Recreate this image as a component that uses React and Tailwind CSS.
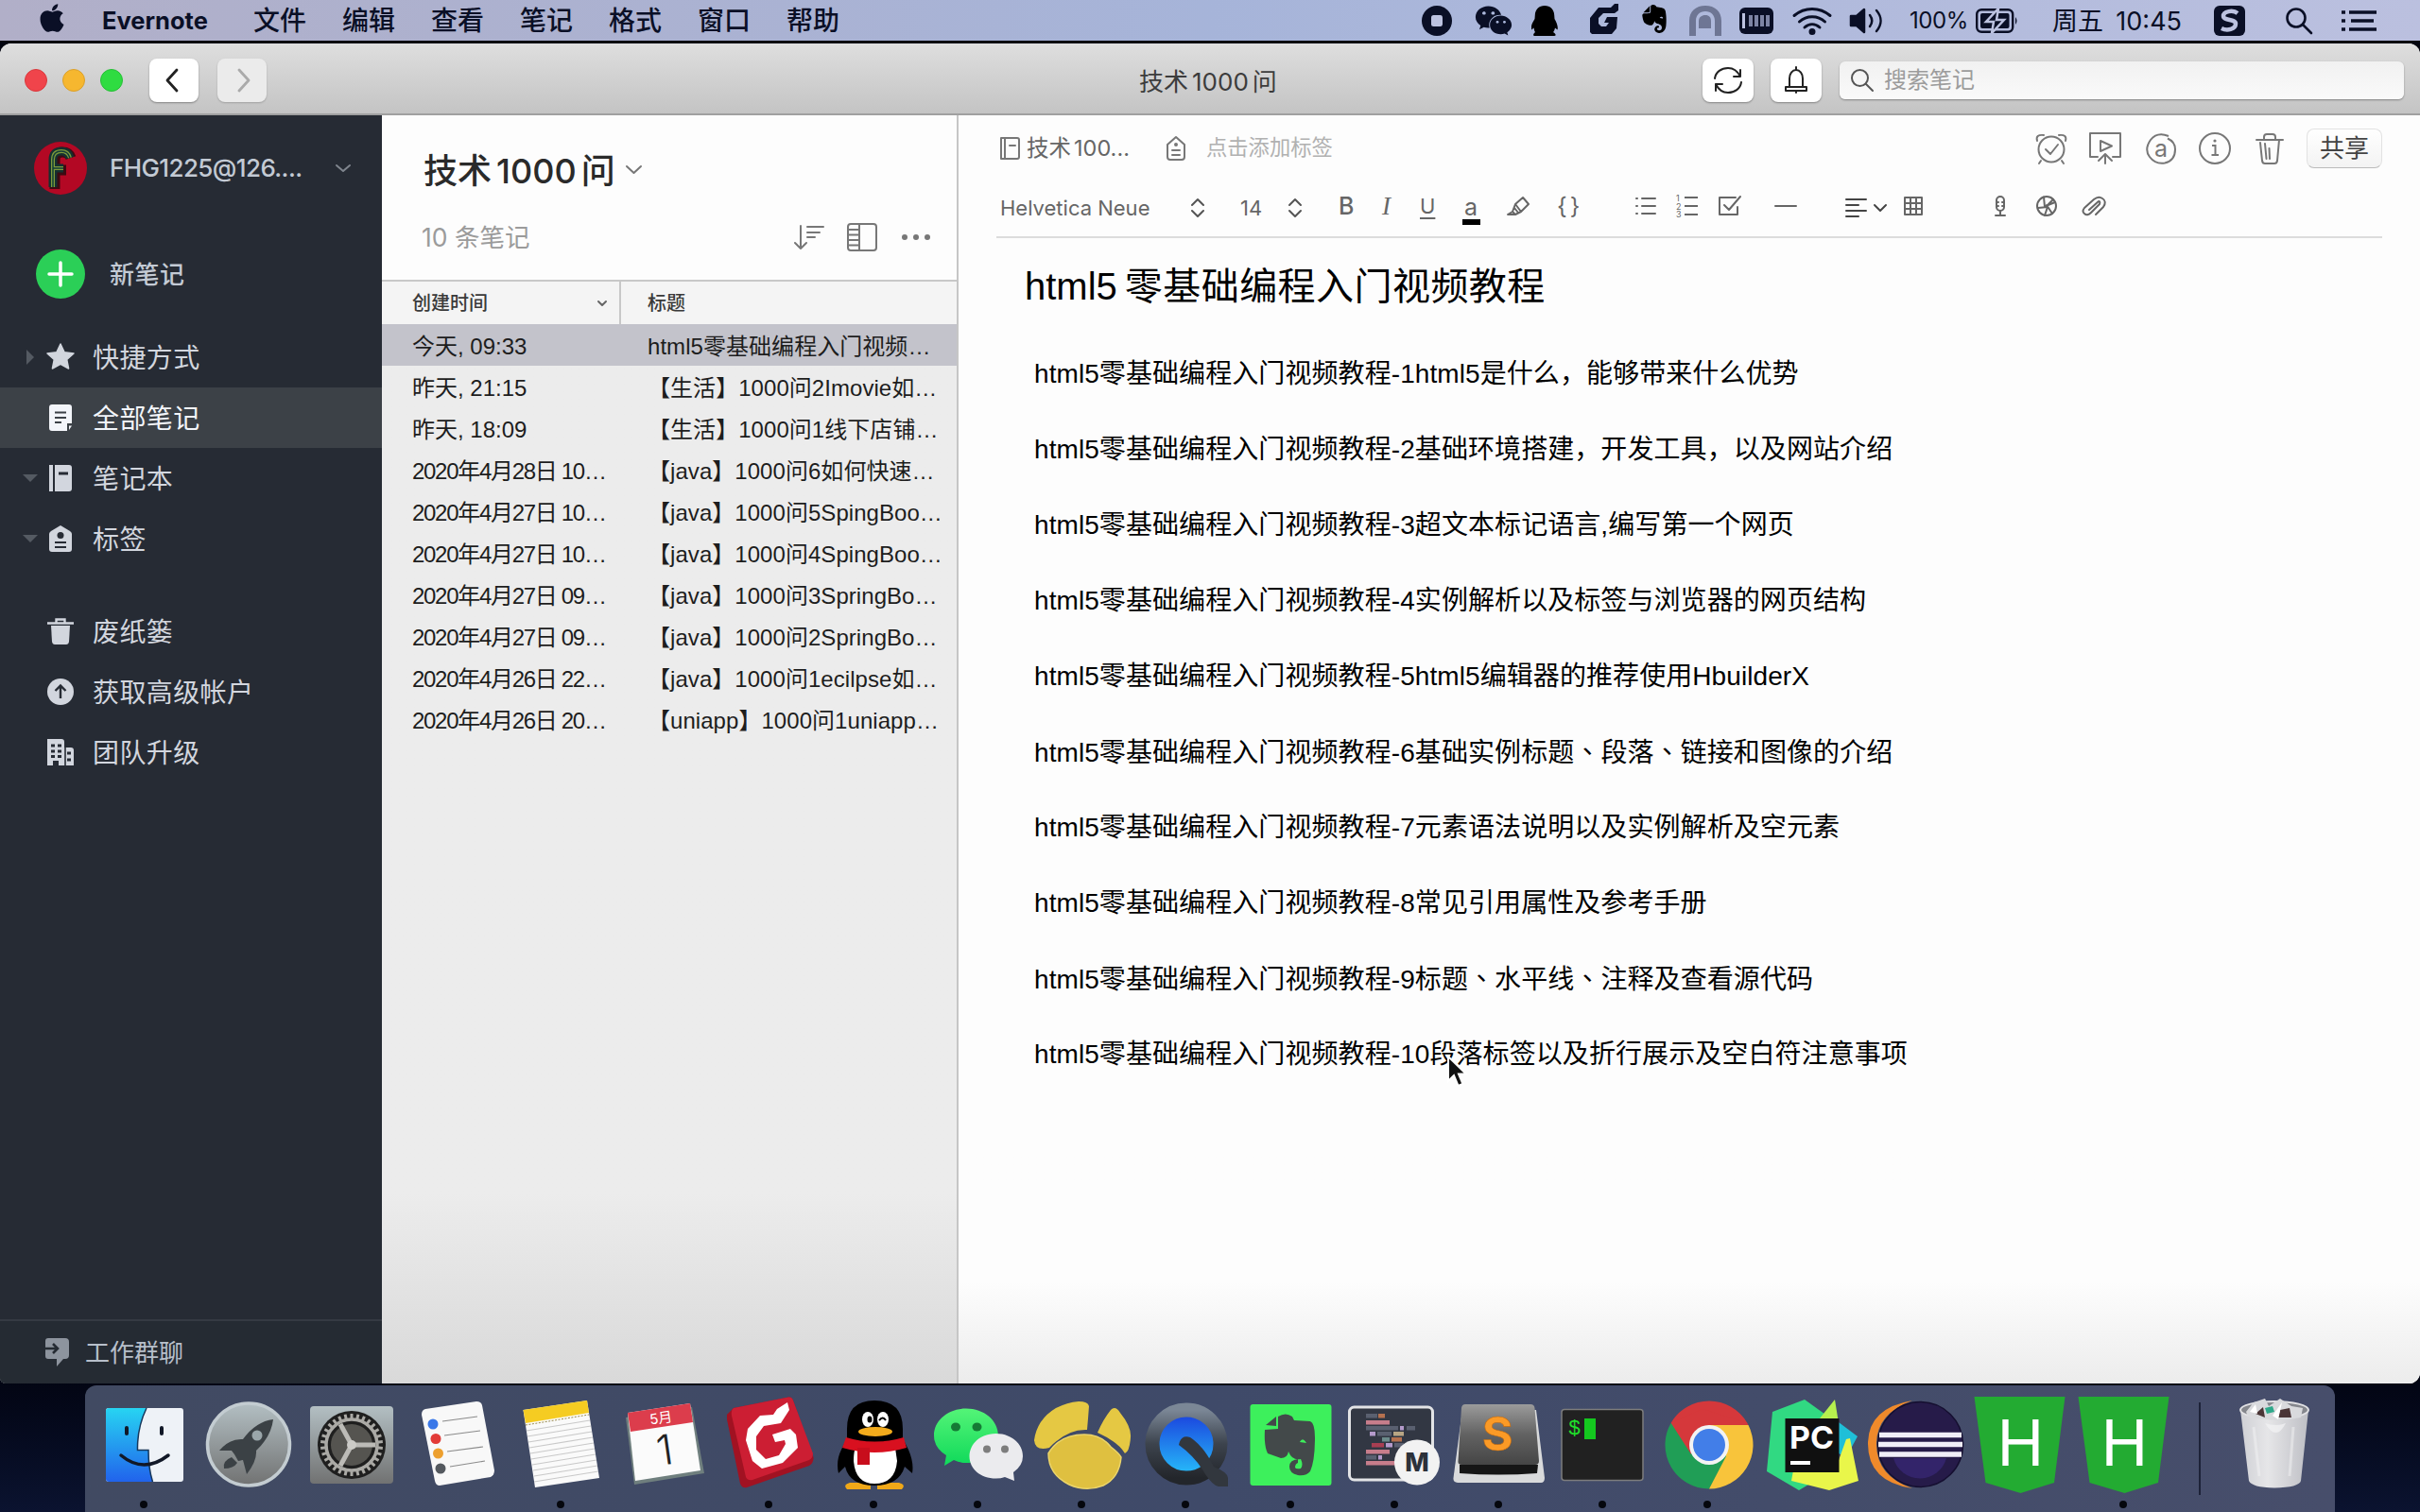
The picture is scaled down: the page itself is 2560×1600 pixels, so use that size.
import React from 'react';
import { FaApple, FaEvernote, FaQq, FaWeixin } from 'react-icons/fa';

const menus = ['文件', '编辑', '查看', '笔记', '格式', '窗口', '帮助'];

const notes = [
  { date: '今天, 09:33', title: 'html5零基础编程入门视频…', tight: false },
  { date: '昨天, 21:15', title: '【生活】1000问2Imovie如…', tight: false },
  { date: '昨天, 18:09', title: '【生活】1000问1线下店铺…', tight: false },
  { date: '2020年4月28日 10…', title: '【java】1000问6如何快速…', tight: true },
  { date: '2020年4月27日 10…', title: '【java】1000问5SpingBoo…', tight: true },
  { date: '2020年4月27日 10…', title: '【java】1000问4SpingBoo…', tight: true },
  { date: '2020年4月27日 09…', title: '【java】1000问3SpringBo…', tight: true },
  { date: '2020年4月27日 09…', title: '【java】1000问2SpringBo…', tight: true },
  { date: '2020年4月26日 22…', title: '【java】1000问1ecilpse如…', tight: true },
  { date: '2020年4月26日 20…', title: '【uniapp】1000问1uniapp…', tight: true },
];

const lines = [
  'html5零基础编程入门视频教程-1html5是什么，能够带来什么优势',
  'html5零基础编程入门视频教程-2基础环境搭建，开发工具，以及网站介绍',
  'html5零基础编程入门视频教程-3超文本标记语言,编写第一个网页',
  'html5零基础编程入门视频教程-4实例解析以及标签与浏览器的网页结构',
  'html5零基础编程入门视频教程-5html5编辑器的推荐使用HbuilderX',
  'html5零基础编程入门视频教程-6基础实例标题、段落、链接和图像的介绍',
  'html5零基础编程入门视频教程-7元素语法说明以及实例解析及空元素',
  'html5零基础编程入门视频教程-8常见引用属性及参考手册',
  'html5零基础编程入门视频教程-9标题、水平线、注释及查看源代码',
  'html5零基础编程入门视频教程-10段落标签以及折行展示及空白符注意事项',
];

// The enumeration comma sits in the middle of its box
const NoteLine = ({ text }) => (
  <div className="flex h-20 items-center pl-20 pt-[7px] text-[28px] tracking-[0.08px]">
    <p className="whitespace-nowrap">
      {text.split('、').map((part, i) => (
        <React.Fragment key={i}>
          {i > 0 && <span className="font-['Noto_Sans_CJK_TC',sans-serif]" lang="zh-TW">、</span>}
          {part}
        </React.Fragment>
      ))}
    </p>
  </div>
);

// Thin line icon, drawn 1:1 in its own box
const Line = ({ w, h, className = '', sw = 2, children }) => (
  <svg
    width={w}
    height={h}
    viewBox={`0 0 ${w} ${h}`}
    className={`shrink-0 overflow-visible ${className}`}
    fill="none"
    stroke="currentColor"
    strokeWidth={sw}
    strokeLinecap="round"
    strokeLinejoin="round"
  >
    {children}
  </svg>
);

const GMark = ({ className }) => (
  <svg width="30" height="32" viewBox="0 0 30 32" className={`shrink-0 ${className}`} fill="currentColor">
    <path d="M30 0V7L26 10H14L9 15V21L12 24H17L20 20H15L18 14H29L28 26L23 32H2L0 30V15L9 4H22L26 0Z" />
  </svg>
);

const MenuBar = () => (
  <div className="flex h-[43px] w-full shrink-0 items-center bg-linear-to-r from-[#b1afc8] via-[#a6b4d9] to-[#bbc0df] text-[28px] text-[#0a0f26]">
    <FaApple className="mb-[5px] ml-[40px] h-[34px] w-[30px] shrink-0" />
    <div className="ml-[38px] w-[160px] shrink-0 text-[25.5px] font-bold">Evernote</div>
    {menus.map((m) => (
      <div key={m} className="w-[94px] shrink-0 whitespace-nowrap pt-px font-medium">{m}</div>
    ))}
    <div className="ml-auto flex w-[1056px] shrink-0 items-center">
      <svg width="32" height="32" viewBox="0 0 32 32" className="shrink-0">
        <circle cx="16" cy="16" r="16" fill="currentColor" />
        <rect x="10" y="10" width="12" height="12" rx="2.5" fill="#bcc2e0" />
      </svg>
      <FaWeixin className="ml-6 h-[36px] w-[40px] shrink-0" />
      <svg width="28" height="32" viewBox="0 0 28 32" className="ml-5 shrink-0" fill="#000">
        <path d="M14 0C20 0 24 4 24.200 10L24.500 14C27 18 28.500 23 27.500 25.500L25 23.500C24.500 26 24 27 23 28C26 30 27 32 23 32H4C1 32 2 30 4 28C3 27 3 25 2.500 23.500L0 25.500C-1 22 1 18 3.500 14L3.800 10C4 4 8 0 14 0Z" />
      </svg>
      <GMark className="mb-1 ml-[34px]" />
      <FaEvernote className="mb-1 ml-[22px] h-[34px] w-[32px] shrink-0 text-black" />
      <svg width="34" height="32" viewBox="0 0 34 32" className="ml-[21px] shrink-0" fill="#6e7694">
        <path d="M0 32V16C0 6 7 0 17 0S34 6 34 16V32H27V16C27 10 23 6 17 6S7 10 7 16V32ZM10 24V17C10 12 13 10 17 10S23 12 23 17V24Z" />
      </svg>
      <svg width="36" height="28" viewBox="0 0 36 28" className="ml-[19px] shrink-0">
        <rect width="36" height="28" rx="6" fill="currentColor" />
        <rect x="3" y="6" width="3" height="16" fill="#bcc2e0" />
        <path d="M12 8v12M18 8v12M24 8v12M30 8v12" stroke="#7d84a4" strokeWidth="4" />
      </svg>
      <Line w={42} h={30} sw={3} className="ml-5">
        <path d="M2 9.500C13 0 29 0 40 9.500M7.500 16C15 9 27 9 34.500 16M13 22C18 17.500 24 17.500 29 22" />
        <circle cx="21" cy="26.500" r="2" fill="currentColor" />
      </Line>
      <Line w={36} h={26} className="ml-[19px]" sw={2.5}>
        <path d="M1 8H7L15 1V25L7 18H1Z" fill="currentColor" />
        <path d="M21 7C24 11 24 15 21 19M28 2C34 9 34 17 28 24" />
      </Line>
      <div className="ml-[27px] w-[66px] shrink-0 whitespace-nowrap text-[24px] tracking-[-0.4px]">100%</div>
      <svg width="46" height="26" viewBox="0 0 46 26" className="ml-1 shrink-0">
        <rect x="1.200" y="1.200" width="38" height="23.600" rx="5" fill="none" stroke="currentColor" strokeWidth="2.400" />
        <rect x="5" y="5" width="30.500" height="16" rx="2" fill="currentColor" />
        <path d="M42 9Q45 13 42 17Z" fill="currentColor" />
        <path d="M24 0L11 14H19L17 26L30 12H22Z" fill="currentColor" stroke="#bcc2e0" strokeWidth="2.500" />
      </svg>
      <div className="ml-[35px] flex w-[141px] shrink-0 items-center justify-between whitespace-nowrap pr-1 pt-px">
        <span className="text-[27px]">周五</span>
        <span className="text-[27px]">10:45</span>
      </div>
      <svg width="33" height="32" viewBox="0 0 33 32" className="ml-[30px] shrink-0">
        <rect width="33" height="32" rx="6" fill="currentColor" />
        <path d="M25 8C20 4 10 6 10 11C10 16 23 14 23 19C23 25 14 27 8 24" fill="none" stroke="#bcc2e0" strokeWidth="4.500" />
      </svg>
      <Line w={30} h={28} sw={2.6} className="ml-[43px]">
        <circle cx="11" cy="11" r="9.500" />
        <path d="M18 18L27 27" />
      </Line>
      <svg width="37" height="22" viewBox="0 0 37 22" className="ml-[29px] shrink-0" stroke="currentColor" strokeWidth="3.600">
        <path d="M0 2h4M8 2h29M0 11h4M10 11h24M0 20h4M8 20h29" />
      </svg>
    </div>
  </div>
);

const TitleBar = () => (
  <div className="flex h-[76px] shrink-0 items-center border-b-2 border-[#a0a0a0] bg-linear-to-b from-[#dedede] to-[#c4c4c4] pt-[3px]">
    <div className="flex w-[738px] shrink-0 items-center">
      <div className="ml-[26px] size-6 rounded-full border border-[#d9383c] bg-[#f0444b]" />
      <div className="ml-4 size-6 rounded-full border border-[#dba02a] bg-[#f6b72f]" />
      <div className="ml-4 size-6 rounded-full border border-[#26bf36] bg-[#2fdc41]" />
      <div className="ml-7 flex h-[46px] w-[52px] items-center justify-center rounded-lg bg-white text-[#222] shadow-[0_1px_2px_rgba(0,0,0,0.35)]">
        <Line w={12} h={22} sw={2.8} className="mr-1 mt-px"><path d="M11 0L1 11L11 22" /></Line>
      </div>
      <div className="ml-5 flex h-[46px] w-[52px] items-center justify-center rounded-lg bg-[#ebebeb] text-[#aaa] shadow-[0_1px_2px_rgba(0,0,0,0.2)]">
        <Line w={12} h={22} sw={2.8} className="ml-1 mt-px"><path d="M1 0L11 11L1 22" /></Line>
      </div>
    </div>
    <div className="flex w-[1063px] shrink-0 gap-[4px] whitespace-nowrap pl-[467px] pt-1 text-[26px] text-[#3c3c3c]">
      <span>技术</span>
      <span>1000</span>
      <span>问</span>
    </div>
    <div className="flex h-[46px] w-[54px] shrink-0 items-center justify-center rounded-lg bg-white text-[#222] shadow-[0_1px_2px_rgba(0,0,0,0.35)]">
      <Line w={30} h={28}>
        <path d="M1 12C2 5 8 1 15 1C21 1 25 4 28 10M28 3V10H21M29 16C28 23 22 27 15 27C9 27 5 24 2 18M2 25V18H9" />
      </Line>
    </div>
    <div className="ml-[18px] flex h-[46px] w-[54px] shrink-0 items-center justify-center rounded-lg bg-white text-[#222] shadow-[0_1px_2px_rgba(0,0,0,0.35)]">
      <Line w={26} h={28}>
        <path d="M13 0V3M6 21V12C6 7 9 3 13 3S20 7 20 12V21M2 21H24V25H2ZM13 25V27" />
      </Line>
    </div>
    <div className="ml-[19px] flex h-10 w-[597px] shrink-0 items-center rounded-md bg-linear-to-b from-[#f1f1f1] to-[#fafafa] pl-3 text-[24px] text-[#9c9c9c] shadow-[0_1px_2px_rgba(0,0,0,0.35)]">
      <Line w={24} h={24} className="text-[#555]">
        <circle cx="9.500" cy="9.500" r="8.500" />
        <path d="M16 16L23 23" />
      </Line>
      <span className="ml-[11px] whitespace-nowrap pt-px">搜索笔记</span>
    </div>
  </div>
);

const Star = () => (
  <path d="M14 0l4.100 8.800 9.900 1.200-7.300 6.500L22.600 26 14 21.300 5.400 26l1.900-9.500L0 10l9.900-1.200z" stroke="currentColor" strokeWidth="1.500" strokeLinejoin="round" />
);

const sideIcons = {
  star: <Star />,
  note: (
    <>
      <path d="M5 0H23Q26 0 26 3V20H21V28H5Q2 28 2 25V3Q2 0 5 0Z" />
      <path d="M23 22.500H26L23 27Z" />
      <path d="M8 8.500H20M8 14H20M8 19H15" stroke="#3c4147" strokeWidth="2.200" />
    </>
  ),
  book: (
    <>
      <path d="M2 0H6V28H2ZM8 0H23Q26 0 26 3V25Q26 28 23 28H8Z" />
      <path d="M12 9H22" stroke="#262b34" strokeWidth="3" />
    </>
  ),
  tag: (
    <>
      <path d="M14 0L24 6Q26 7.500 26 9V25Q26 28 23 28H5Q2 28 2 25V9Q2 7.500 4 6Z" />
      <circle cx="14" cy="10.500" r="3.500" fill="#262b34" />
      <path d="M8 18H20M8 23H20" stroke="#262b34" strokeWidth="2" />
    </>
  ),
  trash: (
    <>
      <path d="M4 8H24L23 25Q22.500 28 20 28H8Q5.500 28 5 25Z" />
      <path d="M0 5.500H28M9.500 5V1.500H18.500V5" fill="none" stroke="currentColor" strokeWidth="2.400" />
    </>
  ),
  up: (
    <>
      <circle cx="14" cy="14" r="14" />
      <path d="M14 21V8M8.500 13L14 7.500L19.500 13" fill="none" stroke="#262b34" strokeWidth="2.400" />
    </>
  ),
  team: (
    <>
      <path d="M0 28V0H15Q18 0 18 3V9H25Q28 9 28 12V28H12V23H6V28Z" />
      <path d="M4 7H8M11 7H15M4 13H8M11 13H15M4 18.500H8M11 18.500H15M21 15H25M21 22H25" stroke="#262b34" strokeWidth="3" />
      <path d="M19 9V28" stroke="#262b34" strokeWidth="1.600" />
    </>
  ),
};

const SideItem = ({ icon, label, arrow, active }) => (
  <div className={`flex h-16 items-center ${active ? 'bg-[#3c4147] text-[#f3f5fa]' : 'text-[#d2d6de]'}`}>
    <div className="flex w-[50px] shrink-0 justify-center pl-[14px] text-[#545a62]">
      {arrow && (
        <svg width="16" height="16" viewBox="0 0 16 16" fill="currentColor">
          <path d={arrow === 'right' ? 'M4 0L12 8L4 16Z' : 'M0 4H16L8 12Z'} />
        </svg>
      )}
    </div>
    <svg width="28" height="28" viewBox="0 0 28 28" fill="currentColor" className="shrink-0 overflow-visible">
      {sideIcons[icon]}
    </svg>
    <span className="ml-5 whitespace-nowrap pt-px text-[28px] tracking-[0.4px]">{label}</span>
  </div>
);

const Sidebar = () => (
  <div className="flex w-[404px] shrink-0 flex-col bg-[#262b34]">
    <div className="flex h-[112px] items-center pl-9">
      <svg width="56" height="56" viewBox="0 0 56 56" className="shrink-0">
        <circle cx="28" cy="28" r="28" fill="#b30824" />
        <g fill="none" strokeLinejoin="round">
          <path d="M22 50V20Q22 11 30 11Q37 11 39 17M22 30H34" stroke="#3d0a12" strokeWidth="11" />
          <path d="M20 48V19Q20 10 29 10Q36 10 38 17M20 28H31" stroke="#15302f" strokeWidth="9" />
          <path d="M20 48V19Q20 10 29 10Q36 10 38 17M20 28H31" stroke="#7d9a3a" strokeWidth="4" />
          <path d="M20 48V19Q20 10 29 10Q36 10 38 17M20 28H31" stroke="#123c38" strokeWidth="1.500" />
        </g>
      </svg>
      <span className="ml-6 w-[239px] shrink-0 whitespace-nowrap text-[26px] font-medium tracking-[-0.6px] text-[#c3cad4]">FHG1225@126....</span>
      <Line w={16} h={8} className="text-[#7f858e]"><path d="M1 1L8 7L15 1" /></Line>
    </div>
    <div className="flex h-[112px] items-center pl-[38px]">
      <div className="flex size-[52px] shrink-0 items-center justify-center rounded-full bg-[#2bcf57] text-white">
        <Line w={26} h={26} sw={3.5}><path d="M13 1V25M1 13H25" /></Line>
      </div>
      <span className="ml-[26px] pt-px text-[26px] font-medium tracking-[0.5px] text-[#c3cad4]">新笔记</span>
    </div>
    <SideItem icon="star" label="快捷方式" arrow="right" />
    <SideItem icon="note" label="全部笔记" active />
    <SideItem icon="book" label="笔记本" arrow="down" />
    <SideItem icon="tag" label="标签" arrow="down" />
    <div className="h-[34px]" />
    <SideItem icon="trash" label="废纸篓" />
    <SideItem icon="up" label="获取高级帐户" />
    <SideItem icon="team" label="团队升级" />
    <div className="mt-auto flex h-[68px] items-center border-t-2 border-[#353a43] bg-[#252b33] pl-12 text-[26px] text-[#b7bfca]">
      <svg width="25" height="30" viewBox="0 0 25 30" fill="#8d949e" className="shrink-0">
        <path d="M3 0H21Q25 0 25 4V18Q25 22 21 22H19L12 30V22H3Q0 22 0 19V3Q0 0 3 0Z" />
        <path d="M0 11H12M8 6L13 11L8 16" fill="none" stroke="#252b33" strokeWidth="2.600" />
      </svg>
      <span className="ml-[17px] whitespace-nowrap pt-px">工作群聊</span>
    </div>
  </div>
);

const NoteList = () => (
  <div className="flex w-[610px] shrink-0 flex-col border-r-2 border-[#c6c6c6] bg-linear-to-b from-[#ececec] from-85% to-[#d9d9d9]">
    <div className="h-[174px] shrink-0 bg-[#fdfdfd]">
      <div className="flex h-[118px] items-center pl-[44px] text-[36px] font-medium text-[#2a2a2a]">
        <div className="flex w-[214px] shrink-0 gap-[5px] whitespace-nowrap">
          <span>技术</span>
          <span>1000</span>
          <span>问</span>
        </div>
        <Line w={17} h={9} className="-mt-1 text-[#777]"><path d="M1 1L8.500 8L16 1" /></Line>
      </div>
      <div className="flex h-[22px] items-center pl-[42px] text-[26.5px] text-[#9b9b9b]">
        <span className="w-[394px] shrink-0 whitespace-nowrap">10 条笔记</span>
        <Line w={32} h={26} className="text-[#777]">
          <path d="M7 1V25M1 19L7 25L13 19M14 2H31M14 8H27M14 13H22" />
        </Line>
        <Line w={32} h={30} className="ml-6 text-[#777]">
          <rect x="1" y="1" width="30" height="28" rx="3" />
          <path d="M13 1V29M1 7H13M1 12.500H13M1 18H13M1 23.500H13" />
        </Line>
        <svg width="30" height="6" viewBox="0 0 30 6" fill="#777" className="ml-[26px] shrink-0">
          <circle cx="3" cy="3" r="3" /><circle cx="15" cy="3" r="3" /><circle cx="27" cy="3" r="3" />
        </svg>
      </div>
    </div>
    <div className="flex h-[47px] shrink-0 border-t-2 border-[#c8c8c8] bg-[#f4f4f4] text-[20px] font-medium text-[#3a3a3a]">
      <div className="flex w-[253px] shrink-0 items-center border-r-2 border-[#c8c8c8] pl-8">
        <span className="w-[196px] shrink-0 pt-px">创建时间</span>
        <Line w={10} h={6} className="text-[#666]"><path d="M1 1L5 5L9 1" /></Line>
      </div>
      <div className="flex items-center pl-7 pt-px">标题</div>
    </div>
    {notes.map((n, i) => (
      <div
        key={i}
        className={`flex h-11 shrink-0 items-center whitespace-nowrap pt-[3px] font-['Liberation_Sans','Noto_Sans_CJK_SC',sans-serif] text-[24px] text-[#1d1d1d] ${i === 0 ? 'bg-[#c3c3cb]' : ''}`}
      >
        <span className={`w-[281px] shrink-0 pl-8 ${n.tight ? 'tracking-[-1.3px]' : ''}`}>{n.date}</span>
        <span className="tracking-[0.05px]">{n.title}</span>
      </div>
    ))}
  </div>
);

const Stepper = ({ className }) => (
  <Line w={14} h={20} className={className}><path d="M1 7L7 1L13 7M1 13L7 19L13 13" /></Line>
);

const EditorHeader = () => (
  <div className="flex h-[70px] shrink-0 items-center pl-[44px] leading-normal text-[#777]">
    <Line w={21} h={24} className="">
      <path d="M1 1H18Q20 1 20 3V21Q20 23 18 23H1ZM5 1V23M10 9H16" />
    </Line>
    <div className="ml-[7px] flex w-[148px] shrink-0 gap-[3px] whitespace-nowrap text-[23.5px] text-[#666]">
      <span>技术</span>
      <span>100...</span>
    </div>
    <Line w={20} h={26}>
      <path d="M10 1L19 9V22Q19 25 16 25H4Q1 25 1 22V9ZM6 15H14M6 20H14" />
      <circle cx="10" cy="9" r="1" fill="currentColor" />
    </Line>
    <span className="ml-[22px] whitespace-nowrap pb-[2px] text-[22.3px] text-[#b1b1b1]">点击添加标签</span>
    <div className="ml-auto flex items-center pr-10">
      <Line w={32} h={33}>
        <circle cx="16" cy="17" r="13.500" />
        <path d="M10 17L15 22L23 12M1 8Q-1 1 8 2M31 8Q33 1 24 2M3 32L5 29M29 32L27 29" />
      </Line>
      <Line w={34} h={34} className="ml-6">
        <path d="M9 26H1V1H33V26H25M17 33V24M10 30L17 23L24 30M12 9V20L24 14.500Z" />
      </Line>
      <svg width="32" height="33" viewBox="0 0 32 33" className="ml-[26px] shrink-0 overflow-visible">
        <path d="M24 3Q12 -2 5 7Q-2 17 4 25Q10 33 20 31.500Q31 29 31 17Q31 9 23 5.500" fill="none" stroke="currentColor" strokeWidth="2" />
        <text x="16" y="25" textAnchor="middle" fontSize="25" fill="currentColor">a</text>
      </svg>
      <svg width="34" height="34" viewBox="0 0 34 34" className="ml-6 shrink-0">
        <circle cx="17" cy="17" r="16" fill="none" stroke="currentColor" strokeWidth="2" />
        <path d="M14 14H17.500V24M13.500 24H21" fill="none" stroke="currentColor" strokeWidth="2" />
        <circle cx="17" cy="9" r="1.600" fill="currentColor" />
      </svg>
      <Line w={30} h={33} className="ml-[26px]">
        <path d="M1 7H29M9 7V4Q9 1 12 1H18Q21 1 21 4V7M5 10L7 29Q7.500 32 10 32H20Q22.500 32 23 29L25 7M10 11L11.500 27M14.500 16L15 27" />
      </Line>
      <div className="ml-[24px] flex h-[42px] w-[80px] shrink-0 items-center justify-center rounded-lg border border-[#e2e2e2] border-b-[#bbb] bg-linear-to-b from-white to-[#f3f3f3] text-[26px] leading-none text-[#444]">共享</div>
    </div>
  </div>
);

const EditorToolbar = () => (
  <div className="mx-10 flex h-[60px] shrink-0 items-center border-b-2 border-[#dcdcdc] pb-[6px] text-[22px] text-[#666]">
    <span className="ml-1 w-[202px] shrink-0 whitespace-nowrap pt-1">Helvetica Neue</span>
    <Stepper className="mt-1 text-[#555]" />
    <span className="ml-[38px] w-[51px] shrink-0 pt-1">14</span>
    <Stepper className="mt-1 text-[#555]" />
    <span className="ml-[39px] w-[46px] shrink-0 text-[25px] font-medium">B</span>
    <span className="w-[40px] shrink-0 font-['Liberation_Serif',serif] text-[27px] italic">I</span>
    <span className="w-[45px] shrink-0 text-[22px] underline underline-offset-4">U</span>
    <div className="flex w-[47px] shrink-0 flex-col pt-2">
      <span className="h-[25px] pl-[2px] text-[25px] leading-[25px]">a</span>
      <span className="h-[6px] w-[19px] bg-black" />
    </div>
    <Line w={24} h={20} className="">
      <path d="M1 19H9L6 16ZM6 16L9 8L17 1L23 8L15 16L9 19M9 8L15 16M8 12L12 17" />
    </Line>
    <span className="ml-[29px] w-[83px] shrink-0 whitespace-nowrap text-[25px] tracking-[3px]">{'{}'}</span>
    <Line w={22} h={20}><path d="M1 2H2M1 10H2M1 18H2M7 2H21M7 10H21M7 18H21" /></Line>
    <svg width="24" height="24" viewBox="0 0 24 24" className="ml-[21px] shrink-0 overflow-visible" fill="currentColor">
      <g fontSize="9"><text x="0" y="7">1</text><text x="0" y="15.500">2</text><text x="0" y="24">3</text></g>
      <path d="M9 3H23M9 12H23M9 21H23" stroke="currentColor" strokeWidth="2" />
    </svg>
    <Line w={24} h={20} className="ml-[21px]"><path d="M18 1H1V19H20V11M6 9L11 14L23 0" /></Line>
    <Line w={22} h={2} className="ml-9"><path d="M0 1H22" /></Line>
    <Line w={22} h={20} className="ml-[52px] mt-1 text-[#444]"><path d="M1 1H22M1 7H14M1 13H22M1 19H14" /></Line>
    <Line w={14} h={8} className="ml-2 mt-1 text-[#444]"><path d="M1 1L7 7L13 1" /></Line>
    <Line w={20} h={20} className="ml-[18px]"><path d="M1 1H19V19H1ZM7 1V19M13 1V19M1 7H19M1 13H19" /></Line>
    <Line w={12} h={22} className="ml-[76px]">
      <rect x="2" y="1" width="8" height="15" rx="4" />
      <path d="M6 16V21M1 21H11M2 7H4M8 7H10M2 11H4M8 11H10" />
    </Line>
    <Line w={22} h={22} className="ml-8">
      <circle cx="11" cy="11" r="10" />
      <path d="M8 1.500L9 12M20 7L10 11M17 19L11 10M9 21L12 12M2 13L12 12M13 9L18 4" />
    </Line>
    <Line w={26} h={20} className="ml-[26px]">
      <path d="M15 19L23 11Q27 5 22 2Q18 -1 13 3L3 12Q0 16 3 18Q6 21 10 17L19 8Q20 5 18 5L8 14" />
    </Line>
  </div>
);

const Editor = () => (
  <div className="flex flex-1 flex-col bg-[#fdfdfd] bg-linear-to-b from-[#fdfdfd] from-92% to-[#ececec]">
    <EditorHeader />
    <EditorToolbar />
    <div className="font-['Liberation_Sans','Noto_Sans_CJK_SC',sans-serif] text-black">
      <div className="flex h-[100px] items-center gap-2 whitespace-nowrap pl-[70px] pt-px text-[40px]">
        <span>html5</span>
        <span className="tracking-[0.45px]">零基础编程入门视频教程</span>
      </div>
      {lines.map((l) => (
        <NoteLine key={l} text={l} />
      ))}
    </div>
  </div>
);

const gearTeeth = Array.from({ length: 30 }, (_, i) => i * 12);

const codeBars = [
  [25, 30, 12, '#5a6070'], [38, 30, 7, '#b5714f'], [25, 37, 25, '#c77d8b'],
  [25, 43, 34, '#5a6070'], [61, 43, 4, '#b49acb'], [68, 43, 9, '#5a6070'],
  [29, 49, 6, '#b49acb'], [37, 49, 15, '#5a6070'], [54, 49, 11, '#b8a584'],
  [42, 55, 8, '#6b8a8a'], [52, 55, 11, '#b5714f'], [31, 61, 13, '#a83e52'],
  [46, 61, 7, '#b49acb'], [55, 61, 10, '#5a6070'], [25, 68, 25, '#c77d8b'],
  [25, 74, 11, '#5a6070'], [38, 74, 4, '#b49acb'], [25, 80, 32, '#c77d8b'],
];

const HBuilder = () => (
  <>
    <path d="M7.500 12H103.500L92 103L56.500 114L19.500 103Z" fill="#23ab32" />
    <text x="56.500" y="85.500" textAnchor="middle" fontSize="67" fill="#fff">H</text>
  </>
);

const dockApps = [
  {
    dot: true,
    art: (
      <>
        <rect x="15" y="24" width="82" height="78" rx="3" fill="#eef2f7" />
        <path d="M58 24Q48 45 48.500 68.500H60Q60 88 64.500 102H18Q15 102 15 99V27Q15 24 18 24Z" fill="url(#finder)" />
        <path d="M58 24Q48 45 48.500 68.500H60Q60 88 64.500 102" fill="none" stroke="#16385c" strokeWidth="1.500" />
        <path d="M37 45V51M74 45V51" stroke="#111827" strokeWidth="4" strokeLinecap="round" />
        <path d="M31 74Q55 94 81 74" fill="none" stroke="#111827" strokeWidth="3.500" strokeLinecap="round" />
      </>
    ),
  },
  {
    art: (
      <>
        <circle cx="56" cy="62.500" r="43.500" fill="url(#steel)" stroke="#c3ccd1" strokeWidth="3.500" />
        <path d="M82 36Q64 38 50 57Q36 56 25 69L38 69L41 73L45 80L50 79L54 94Q65 80 64 69Q80 54 82 36Z" fill="#3b4145" />
        <path d="M38 76Q28 80 30 88Q40 88 44 82Z" fill="#3b4145" />
        <circle cx="65" cy="53" r="5.500" fill="#9aa6aa" />
      </>
    ),
  },
  {
    art: (
      <>
        <rect x="11" y="22" width="88" height="82" rx="4" fill="url(#steel)" />
        <circle cx="55" cy="63" r="36" fill="#1f1f1f" />
        {gearTeeth.map((a) => (
          <rect key={a} x="53.500" y="30" width="3" height="6" fill="#aaa9a5" transform={`rotate(${a} 55 63)`} />
        ))}
        <circle cx="55" cy="63" r="27" fill="none" stroke="#aaa9a5" strokeWidth="3.500" />
        <circle cx="55" cy="63" r="22" fill="#555450" />
        <path d="M55 63L43 41M55 63L80 63M55 63L43 85" stroke="#bcbbb7" strokeWidth="5" />
        <circle cx="55" cy="63" r="5" fill="#cccbc7" />
      </>
    ),
  },
  {
    art: (
      <>
        <path d="M22 25L76 17Q81 17 82 21L95 90Q95 95 91 97L37 106Q33 106 32 101L18 31Q18 26 22 25Z" fill="#f8f8f8" />
        <path d="M40 38L77 33M42 53L80 48M45 70L83 65M48 86L85 80" stroke="#8b8b8b" strokeWidth="1.200" />
        <circle cx="30" cy="41" r="5.500" fill="#3a78e8" /><circle cx="33" cy="56.500" r="5.500" fill="#e23b38" />
        <circle cx="35.500" cy="72" r="5.500" fill="#eda02f" /><circle cx="38" cy="88" r="5.500" fill="#54595f" />
      </>
    ),
  },
  {
    dot: true,
    art: (
      <>
        <path d="M15.500 26L83 16L96 98L28 108Z" fill="#fafafa" />
        <path d="M15.500 26L83 16L85 29L18 40Z" fill="#f5cc22" />
        <path d="M18 42L85 31" stroke="#9a8a4a" strokeWidth="1" strokeDasharray="2 1.500" />
        <path d="M19 48L86 37M20 54L87 43M21 60L88 49M22 66L89 55M23 72L90 61M24 78L91 67M25 84L92 73M26 90L93 79M27 96L94 85M27 102L95 91" stroke="#c9c9c9" strokeWidth="1.200" />
      </>
    ),
  },
  {
    art: (
      <>
        <path d="M14 34L84 23L97 93L23 105Z" fill="#6f7f7e" />
        <path d="M16 29L82 19L93 90L24 101Z" fill="#fbfbfb" />
        <path d="M16 29L82 19L85 39L19 49Z" fill="#dc3d4c" />
        <text x="51" y="40" textAnchor="middle" fontSize="15" fill="#fff" transform="rotate(-8 51 34)">5月</text>
        <text x="55" y="84" textAnchor="middle" fontSize="44" fontWeight="300" fill="#222" transform="rotate(-8 55 68)">1</text>
      </>
    ),
  },
  {
    dot: true,
    art: (
      <>
        <path d="M11 31L18 24L76 12.500Q80 12 81 16L102.500 76Q103 82 98 85L32 108Q27 109 25 104L11 36Z" fill="#a11222" />
        <path d="M18 24L76 12.500Q80 12 81 16L102 72Q102 77 98 79L38 100Q33 101 31 97L16 32Q15 26 18 24Z" fill="#cc1e33" />
        <path d="M64 25L75 18L77 26L68 40L50 43L42 54V68L52 78L66 74L73 62L72 58L62 60L59 52L78 46L84 52L86 66L70 82L48 88L38 80L31 58L33 46L46 32L60 31Z" fill="#fff" />
      </>
    ),
  },
  {
    dot: true,
    art: (
      <>
        <path d="M30 103Q22 105 27 110H52V103ZM82 103Q90 105 85 110H59V103Z" fill="#f0a818" />
        <path d="M56 16Q86 16 86 46L86 56L92 68Q98 82 96 93L88 86Q82 106 56 106Q30 106 25 86L18 93Q15 80 21 68L27 56V46Q27 16 56 16Z" fill="#000" />
        <path d="M36 66Q34 70 34 80Q36 104 56 104Q78 104 80 80L78 66Z" fill="#fff" />
        <ellipse cx="49" cy="36" rx="6" ry="8" fill="#fff" /><ellipse cx="65" cy="36" rx="6" ry="8" fill="#fff" />
        <ellipse cx="51" cy="36" rx="2.500" ry="3.500" /><path d="M61 37Q65 32 68 37" fill="none" stroke="#000" strokeWidth="2" />
        <ellipse cx="57" cy="49" rx="18" ry="5" fill="#f2ab1c" />
        <path d="M26 55Q56 64 87 55L90 66Q56 76 22 66Z" fill="#d8101f" />
        <path d="M38 66H51V84H38Z" fill="#c80d1c" />
      </>
    ),
  },
  {
    dot: true,
    art: (
      <>
        <path d="M43 24.500C62 24.500 77 37 77 53.500S62 82 43 82Q36 82 30 79L20 85L22 74Q9 66 9 53C9 37 24 24.500 43 24.500Z" fill="url(#green)" />
        <ellipse cx="32" cy="44" rx="5" ry="4.500" fill="#157a35" /><ellipse cx="54.500" cy="44" rx="5" ry="4.500" fill="#157a35" />
        <path d="M74.500 51C90 51 103 61 103 75Q103 85 93 92L94 101L84 97Q80 98.500 74.500 98.500C58 98.500 46.500 88 46.500 75S58 51 74.500 51Z" fill="#ebebee" />
        <circle cx="65" cy="67.500" r="4" fill="#7d7d7d" /><circle cx="84" cy="67.500" r="4" fill="#7d7d7d" />
      </>
    ),
  },
  {
    dot: true,
    art: (
      <>
        <path d="M63 22Q62 36 61 47Q40 46 21 66Q6 70 5 58Q8 36 28 24Q40 18 52 17Q62 17 63 22Z" fill="#e5c843" />
        <path d="M72 50Q78 36 86 26Q91 21 96 29Q108 44 107 55Q106 70 101 72Q94 60 72 50Z" fill="#e5c843" />
        <path d="M58 52Q76 52 86 65Q95 72 97 76Q95 98 78 106Q60 113 42 105Q20 94 20 72Q32 52 58 52Z" fill="#dfc040" stroke="#ecd56a" strokeWidth="1.500" />
      </>
    ),
  },
  {
    dot: true,
    art: (
      <>
        <circle cx="56" cy="62" r="36" fill="url(#qtblue)" stroke="url(#qtring)" strokeWidth="15" />
        <path d="M48 63Q50 52 60 55Q74 64 85 86Q100 92 100 98V107H90Q84 106 76 94Q66 76 48 63Z" fill="#32373e" />
      </>
    ),
  },
  {
    dot: true,
    art: (
      <>
        <rect x="12.500" y="20" width="86" height="86" rx="3" fill="#3df05c" />
        <g fill="#43494a">
          <path d="M29 42L40 33V43Z" />
          <path d="M42 33Q50 28 57 33L59 37L76 38Q81 40 81 55Q81 80 76 91Q72 96 63 95Q54 93 54 86Q54 79 63 78V82Q60 83 60 87Q61 89 66 88Q69 84 66 78Q57 80 53 70Q52 77 45 77L31 72Q27 64 28 47L42 46Z" />
        </g>
        <path d="M65 60Q68 54 72 61Z" fill="#3df05c" />
      </>
    ),
  },
  {
    dot: true,
    art: (
      <>
        <rect x="7.500" y="23" width="88" height="77" rx="5" fill="#323743" stroke="#e2e3e6" strokeWidth="3" />
        {codeBars.map(([x, y, w, c], i) => (
          <rect key={i} x={x} y={y} width={w} height="4.500" fill={c} />
        ))}
        <circle cx="79" cy="81.500" r="24" fill="#f2f2f2" />
        <text x="79" y="91" textAnchor="middle" fontSize="27" fontWeight="800" fill="#2c313a">M</text>
      </>
    ),
  },
  {
    dot: true,
    art: (
      <>
        <path d="M17 26H95L104 98Q104 103 100 103H12Q7 103 7.500 98Z" fill="#d9dadb" />
        <path d="M14 84H97L96 93Q55 96 14 93Z" fill="#161616" />
        <path d="M20 20H89Q93 20 93.500 24L98 80Q98 84 94 84H16Q12 84 12.500 80L16 24Q16.500 20 20 20Z" fill="url(#subl)" />
        <text x="54" y="69" textAnchor="middle" fontSize="50" fontWeight="700" fill="#fb9a26" stroke="#c46b10" strokeWidth="0.600">S</text>
      </>
    ),
  },
  {
    dot: true,
    art: (
      <>
        <rect x="12" y="25.500" width="86" height="75" rx="3" fill="#212121" stroke="#7d7d7d" strokeWidth="1.500" />
        <text x="19" y="52" fontSize="22" fill="#1fe02a" fontFamily="Liberation Mono">$</text>
        <rect x="36" y="35" width="12" height="22" fill="#14c81f" />
      </>
    ),
  },
  {
    dot: true,
    art: (
      <>
        <path d="M57 63L16.700 39.750A46.500 46.500 0 0 1 97.300 39.750Z" fill="#d5383b" />
        <path d="M57 63L16.700 39.750A46.500 46.500 0 0 0 57 109.500L77 75Z" fill="#209e56" />
        <path d="M57 42H98.500A46.500 46.500 0 0 1 57 109.500L75 75Z" fill="#f8c43b" />
        <path d="M16.700 39.750L38 73L57 42H98.500L97.300 39.750L50 25Z" fill="#d5383b" />
        <circle cx="57" cy="63" r="21" fill="#f3f3f3" />
        <circle cx="57" cy="63" r="17" fill="#427ee8" />
      </>
    ),
  },
  {
    art: (
      <>
        <path d="M14 28L48 15L80 38L74 92L42 111L8 91Z" fill="#31d982" />
        <path d="M60 40L80 15L84 40Z" fill="#b6ef4e" />
        <path d="M80 36L104 54L92 76L80 70Z" fill="#1fbfd8" />
        <path d="M96 56L92 57L82 85L36 90L34 101L74 111L105 101Z" fill="#e9f64a" />
        <rect x="27.500" y="35" width="57" height="57" fill="#101010" />
        <text x="32" y="67" fontSize="33" fontWeight="700" fill="#fff" textLength="47" lengthAdjust="spacingAndGlyphs">PC</text>
        <rect x="33" y="80" width="21" height="4" fill="#fff" />
      </>
    ),
  },
  {
    art: (
      <>
        <path d="M52 16Q5 24 5 62Q5 102 52 109Q14 96 14 62Q14 30 52 16Z" fill="#ef8a2b" />
        <circle cx="60.500" cy="62.500" r="45" fill="#261b49" stroke="#150f30" strokeWidth="1.500" />
        <path d="M32 77A29 29 0 0 0 88 77Z" fill="#33246a" />
        <path d="M17 52.500H104M16 62.500H105M17 73H104" stroke="#f0eef7" strokeWidth="5.500" />
      </>
    ),
  },
  { art: <HBuilder /> },
  { dot: true, art: <HBuilder /> },
];

const DockIcon = ({ art, dot }) => (
  <svg width="110.24" height="134" viewBox="0 0 110.24 134" className="shrink-0 overflow-visible">
    {art}
    {dot && <circle cx="55" cy="126" r="4" fill="#05070d" />}
  </svg>
);

const Dock = () => (
  <div className="ml-[90px] mt-[2px] flex h-[134px] w-[2380px] shrink-0 rounded-t-xl bg-linear-to-r from-[#414a62] via-[#3f4a69] to-[#474e6b] pl-[7px]">
    <svg width="0" height="0" className="absolute">
      <defs>
        <linearGradient id="finder" x2="0" y2="1"><stop stopColor="#27d4f2" /><stop offset="1" stopColor="#2163ec" /></linearGradient>
        <linearGradient id="steel" x2="0" y2="1"><stop stopColor="#b3bfc3" /><stop offset="1" stopColor="#717272" /></linearGradient>
        <linearGradient id="green" x2="0" y2="1"><stop stopColor="#54f477" /><stop offset="1" stopColor="#0fd95a" /></linearGradient>
        <linearGradient id="qtblue" x2="0" y2="1"><stop stopColor="#1a3bdc" /><stop offset="1" stopColor="#27c3fb" /></linearGradient>
        <linearGradient id="qtring" x2="0" y2="1"><stop stopColor="#7b8796" /><stop offset="0.5" stopColor="#3c434d" /><stop offset="1" stopColor="#23262b" /></linearGradient>
        <linearGradient id="subl" x2="0" y2="1"><stop stopColor="#9b9b9b" /><stop offset="0.5" stopColor="#626262" /><stop offset="1" stopColor="#454545" /></linearGradient>
        <linearGradient id="bin" x2="1" y2="0"><stop stopColor="#cfd0d5" /><stop offset="0.4" stopColor="#e6e6e8" /><stop offset="1" stopColor="#bebfc5" /></linearGradient>
      </defs>
    </svg>
    {dockApps.map((app, i) => (
      <DockIcon key={i} art={app.art} dot={app.dot} />
    ))}
    <div className="ml-[24px] mt-[18px] h-[98px] w-[2px] shrink-0 bg-[#1d2238]" />
    <svg width="112" height="134" viewBox="0 0 112 134" className="ml-[22px] shrink-0">
      <path d="M20 26Q56 40 92 26L84 101Q82 108 56 108.500Q32 108 29 101Z" fill="url(#bin)" />
      <ellipse cx="56" cy="26" rx="36" ry="9" fill="#85878d" stroke="#e2e2e5" strokeWidth="2" />
      <path d="M26 28L34 18L46 14L50 22L62 14L74 22L86 24L84 34Q56 40 28 33Z" fill="#d9dadd" />
      <path d="M36 30L44 23L46 34ZM62 26L72 24L74 34L60 34Z" fill="#4a3536" />
      <path d="M46 24L54 22L56 28L48 30Z" fill="#2ea88a" />
      <path d="M30 28L36 20L38 30ZM54 32L64 18L60 36Z" fill="#fff" />
      <path d="M46 40Q58 60 68 40Q58 44 46 40Z" fill="#f4f4f5" opacity="0.700" />
      <path d="M34 44L40 96M76 44L72 96" stroke="#f3f3f4" strokeWidth="3" opacity="0.500" />
    </svg>
  </div>
);

const App = () => {
  return (
    <div className="relative flex h-[1600px] w-[2560px] flex-col overflow-hidden bg-[#02040f] bg-linear-to-t from-[#0b1330] to-[#02040f] to-10% font-['Inter','Noto_Sans_CJK_SC',sans-serif] leading-none">
      <MenuBar />
      <div className="mt-[3px] flex h-[1418px] shrink-0 flex-col overflow-hidden rounded-xl rounded-bl-md bg-white">
        <TitleBar />
        <div className="flex min-h-0 flex-1">
          <Sidebar />
          <NoteList />
          <Editor />
        </div>
      </div>
      <Dock />
      <svg width="24" height="36" viewBox="0 0 24 36" className="absolute left-[1530px] top-[1116px]">
        <path d="M2 2V28L8 22L12.500 33L17.500 31L13 20.500H21Z" fill="#111" stroke="#fff" strokeWidth="2" />
      </svg>
    </div>
  );
};

export default App;
